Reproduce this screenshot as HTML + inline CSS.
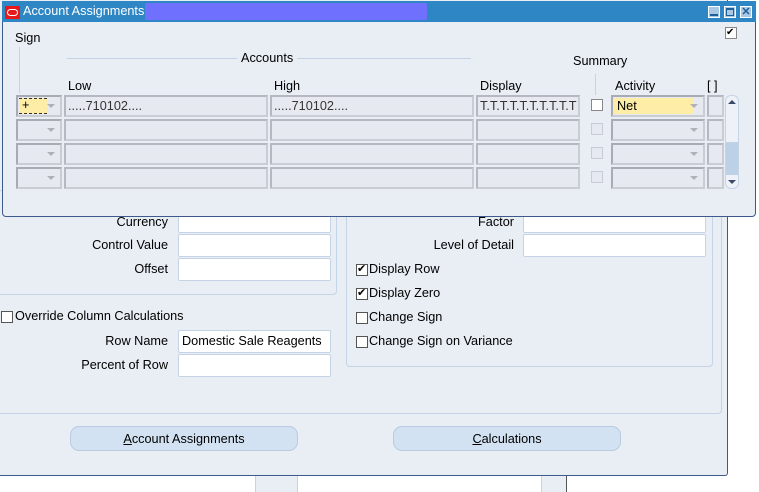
<!DOCTYPE html>
<html><head><style>
body{margin:0;width:759px;height:492px;overflow:hidden;background:#fff;font-family:"Liberation Sans",sans-serif;font-size:12.7px;color:#000;position:relative}
.a{position:absolute}
.fld{position:absolute;background:#fff;border:1px solid #c5d3e6;border-radius:2px;box-sizing:border-box;height:23px;padding:3px 3px;font-size:12.7px;white-space:nowrap;overflow:hidden}
.lbl{position:absolute;text-align:right;font-size:12.7px}
.cb{position:absolute;width:10px;height:10px;border:1px solid #555;background:#fff}
.cb.k::after{content:"✔";position:absolute;left:0;top:-3px;font-size:11px;line-height:14px}
.btn{position:absolute;height:25px;border:1px solid #b8cbe0;border-radius:9px;background:#d2e2f2;text-align:center;line-height:25px;font-size:12.7px;box-sizing:border-box}
.tf{position:absolute;height:22px;box-sizing:border-box;border:2px solid #c9ccd3;border-top-color:#b5b8c0;border-left-color:#b5b8c0;background:#e6eaf0;font-size:12.7px;padding:2px 2px;color:#333;white-space:nowrap;overflow:hidden}
.cmb{position:absolute;height:22px;box-sizing:border-box;border:2px solid #c9ccd3;border-top-color:#a8abb3;border-left-color:#a8abb3;background:#e6eaf0}
.cmb::after{content:"";position:absolute;right:5px;top:7px;border:4px solid transparent;border-top:4px solid #b0b0b8}
.sc{position:absolute;width:10px;height:10px;border:1px solid #c8ccd4;background:#e6eaf0}
</style></head><body>
<div class="a" style="left:0;top:0;width:727px;height:475px;background:#e9eef5;border-right:1px solid #3e5a8a;border-bottom:1px solid #3e5a8a;border-radius:0 0 3px 0"></div>
<div class="a" style="left:5px;top:476px;width:250px;height:16px;background:#fff"></div>
<div class="a" style="left:255px;top:476px;width:41px;height:16px;background:#e9eef5;border-left:1px solid #c5d3e6;border-right:1px solid #c5d3e6"></div>
<div class="a" style="left:541px;top:476px;width:24px;height:16px;background:#e9eef5;border-left:1px solid #c5d3e6;border-right:1px solid #555"></div>
<div class="a" style="left:-5px;top:190px;width:340px;height:103px;border:1px solid #c5d3e6;border-radius:4px"></div>
<div class="a" style="left:-5px;top:190px;width:725px;height:222px;border:1px solid #c5d3e6;border-radius:4px"></div>
<div class="a" style="left:346px;top:190px;width:365px;height:175px;border:1px solid #c5d3e6;border-radius:4px"></div>
<div class="lbl" style="left:40px;top:215px;width:128px">Currency</div>
<div class="fld" style="left:178px;top:210px;width:153px;height:23px"></div>
<div class="lbl" style="left:40px;top:238px;width:128px">Control Value</div>
<div class="fld" style="left:178px;top:234px;width:153px"></div>
<div class="lbl" style="left:40px;top:262px;width:128px">Offset</div>
<div class="fld" style="left:178px;top:258px;width:153px"></div>
<div class="cb" style="left:1px;top:311px"></div>
<div class="a" style="left:15px;top:309px">Override Column Calculations</div>
<div class="lbl" style="left:40px;top:334px;width:128px">Row Name</div>
<div class="fld" style="left:178px;top:330px;width:153px">Domestic Sale Reagents</div>
<div class="lbl" style="left:40px;top:358px;width:128px">Percent of Row</div>
<div class="fld" style="left:178px;top:354px;width:153px"></div>
<div class="lbl" style="left:380px;top:215px;width:134px">Factor</div>
<div class="fld" style="left:523px;top:210px;width:183px"></div>
<div class="lbl" style="left:380px;top:238px;width:134px">Level of Detail</div>
<div class="fld" style="left:523px;top:234px;width:183px"></div>
<div class="cb k" style="left:356px;top:264px"></div><div class="a" style="left:369px;top:262px">Display Row</div>
<div class="cb k" style="left:356px;top:288px"></div><div class="a" style="left:369px;top:286px">Display Zero</div>
<div class="cb" style="left:356px;top:312px"></div><div class="a" style="left:369px;top:310px">Change Sign</div>
<div class="cb" style="left:356px;top:336px"></div><div class="a" style="left:369px;top:334px">Change Sign on Variance</div>
<div class="btn" style="left:70px;top:426px;width:228px"><u>A</u>ccount Assignments</div>
<div class="btn" style="left:393px;top:426px;width:228px"><u>C</u>alculations</div>
<div class="a" style="left:2px;top:1px;width:752px;height:214px;background:#e9eef5;border:1px solid #3e5a8a;border-radius:0 0 4px 4px"></div>
<div class="a" style="left:2px;top:1px;width:754px;height:21px;background:#2e86c4"></div>
<div class="a" style="left:5px;top:6px;width:15px;height:13px;background:#e8191a"></div>
<div class="a" style="left:7px;top:9px;width:9px;height:5px;border:1.5px solid #fff;border-radius:4px"></div>
<div class="a" style="left:23px;top:4px;color:#fff;font-size:12.7px">Account Assignments</div>
<div class="a" style="left:145px;top:3px;width:282px;height:17px;background:#7070ff;border-radius:2px"></div>
<div class="a" style="left:708px;top:6px;width:12px;height:12px;background:#a9c8e6;border:1px solid #fff;box-sizing:border-box"></div>
<div class="a" style="left:710px;top:14px;width:8px;height:2px;background:#1d5f99"></div>
<div class="a" style="left:724px;top:6px;width:12px;height:12px;background:#a9c8e6;border:1px solid #fff;box-sizing:border-box"></div>
<div class="a" style="left:726px;top:8px;width:8px;height:8px;border:1px solid #1d5f99;border-top-width:2px;box-sizing:border-box"></div>
<div class="a" style="left:740px;top:6px;width:12px;height:12px;background:#a9c8e6;border:1px solid #fff;box-sizing:border-box;color:#1d5f99;font-size:11px;line-height:10px;text-align:center;font-weight:bold">✕</div>
<div class="a" style="left:15px;top:31px">Sign</div>
<div class="a" style="left:19px;top:47px;width:1px;height:46px;background:#c5d3e6"></div>
<div class="a" style="left:67px;top:58px;width:404px;height:1px;background:#c5d3e6"></div>
<div class="a" style="left:237px;top:51px;padding:0 4px;background:#e9eef5">Accounts</div>
<div class="a" style="left:573px;top:54px">Summary</div>
<div class="a" style="left:595px;top:74px;width:1px;height:21px;background:#c5d3e6"></div>
<div class="a" style="left:68px;top:79px">Low</div>
<div class="a" style="left:274px;top:79px">High</div>
<div class="a" style="left:480px;top:79px">Display</div>
<div class="a" style="left:615px;top:79px">Activity</div>
<div class="a" style="left:707px;top:79px">[ ]</div>
<div class="a" style="left:725px;top:27px;width:10px;height:10px;border:1px solid #888;background:#fff;font-size:10px;line-height:10px">✔</div>
<div class="cmb" style="left:16px;top:95px;width:46px"><div class="a" style="left:1px;top:1px;width:28px;height:16px;background:#fdeda6;border-top:1px dashed #333;border-bottom:1px dashed #333;box-sizing:border-box;padding-left:3px;line-height:13px">+</div></div>
<div class="tf" style="left:64px;top:95px;width:204px">.....710102....</div>
<div class="tf" style="left:270px;top:95px;width:204px">.....710102....</div>
<div class="tf" style="left:476px;top:95px;width:104px">T.T.T.T.T.T.T.T.T.T</div>
<div class="cb" style="left:591px;top:99px;border-color:#888"></div>
<div class="cmb" style="left:611px;top:95px;width:94px"><div class="a" style="left:1px;top:1px;width:77px;height:16px;background:#fdeda6;padding-left:3px;line-height:16px">Net</div></div>
<div class="tf" style="left:707px;top:95px;width:17px"></div>
<div class="cmb" style="left:16px;top:119px;width:46px"></div>
<div class="tf" style="left:64px;top:119px;width:204px"></div>
<div class="tf" style="left:270px;top:119px;width:204px"></div>
<div class="tf" style="left:476px;top:119px;width:104px"></div>
<div class="sc" style="left:591px;top:123px"></div>
<div class="cmb" style="left:611px;top:119px;width:94px"></div>
<div class="tf" style="left:707px;top:119px;width:17px"></div>
<div class="cmb" style="left:16px;top:143px;width:46px"></div>
<div class="tf" style="left:64px;top:143px;width:204px"></div>
<div class="tf" style="left:270px;top:143px;width:204px"></div>
<div class="tf" style="left:476px;top:143px;width:104px"></div>
<div class="sc" style="left:591px;top:147px"></div>
<div class="cmb" style="left:611px;top:143px;width:94px"></div>
<div class="tf" style="left:707px;top:143px;width:17px"></div>
<div class="cmb" style="left:16px;top:167px;width:46px"></div>
<div class="tf" style="left:64px;top:167px;width:204px"></div>
<div class="tf" style="left:270px;top:167px;width:204px"></div>
<div class="tf" style="left:476px;top:167px;width:104px"></div>
<div class="sc" style="left:591px;top:171px"></div>
<div class="cmb" style="left:611px;top:167px;width:94px"></div>
<div class="tf" style="left:707px;top:167px;width:17px"></div>
<div class="a" style="left:725px;top:95px;width:14px;height:94px;background:#bcd0e6;border:1px solid #c5d3e6;border-radius:6px;box-sizing:border-box;overflow:hidden">
<div class="a" style="left:0;top:0;width:12px;height:46px;background:#eef2f8"></div>
<div class="a" style="left:2px;top:4px;border:4px solid transparent;border-bottom:4px solid #3c4a6a;border-top:0"></div>
<div class="a" style="left:0;top:79px;width:12px;height:14px;background:#eef2f8"></div>
<div class="a" style="left:2px;top:84px;border:4px solid transparent;border-top:4px solid #3c4a6a;border-bottom:0"></div>
</div>
</body></html>
